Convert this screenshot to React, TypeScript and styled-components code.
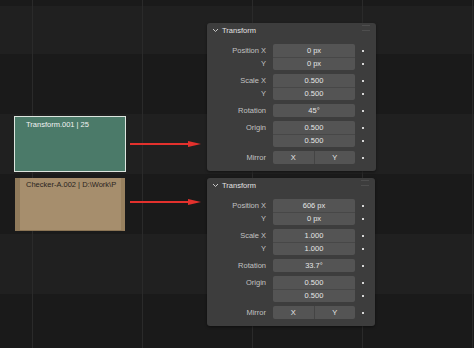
import React from "react";
import styled, { createGlobalStyle } from "styled-components";

const Global = createGlobalStyle`
  html, body { margin: 0; padding: 0; background: #1a1a1a; }
  body {
    font-family: "Liberation Sans", Arial, sans-serif;
    -webkit-font-smoothing: antialiased;
  }
`;

const Canvas = styled.div`
  position: relative;
  width: 474px;
  height: 348px;
  overflow: hidden;
  background-color: #1a1a1a;
  background-image:
    repeating-linear-gradient(to right, #2a2a2a 0 1px, transparent 1px 110px),
    repeating-linear-gradient(to bottom, #1a1a1a 0 60px, #202020 60px 120px);
  background-position: 32px 0, 0 54px;
`;

const Strip = styled.div<{ $kind: "green" | "tan" }>`
  position: absolute;
  box-sizing: border-box;
  font-size: 7.5px;
  white-space: nowrap;
  overflow: hidden;
  ${(p) =>
    p.$kind === "green"
      ? `left:14px; top:116px; width:112px; height:56px;
         background:#4b7a69; border:1px solid #dde5df; color:#f2f2f2;
         padding:3px 0 0 11px;`
      : `left:15px; top:178px; width:110px; height:53px;
         background:#a68e6d; color:#2a241e;
         padding:2px 0 0 6px;
         border-left:5px solid #8f7a5b; border-right:4px solid #98815f;
         border-bottom:1px solid #8a7455;`}
`;

const Arrows = styled.svg`
  position: absolute;
  left: 126px;
  top: 136px;
`;

const PanelStack = styled.div`
  position: relative;
  display: flex;
  flex-direction: column;
  gap: 7px;
  padding: 23px 0 0 207px;
`;

const Panel = styled.section<{ $w: number }>`
  width: ${(p) => p.$w}px;
  background: #3d3d3d;
  border-radius: 3px;
  padding-bottom: 7px;
  box-shadow: 0 1px 3px rgba(0, 0, 0, 0.45);
`;

const Header = styled.div`
  display: flex;
  align-items: center;
  height: 14px;
  margin-bottom: 7px;
  padding: 0 5px 0 5px;
  color: #e2e2e2;
  font-size: 7.5px;
  gap: 3px;
`;

const HeaderTitle = styled.span`
  flex: 1;
`;

const Grip = styled.div`
  width: 8px;
  height: 4px;
  border-top: 1px solid #4e4e4e;
  border-bottom: 1px solid #4e4e4e;
  margin-right: 1px;
  margin-top: -4px;
`;

const Body = styled.div`
  display: flex;
  flex-direction: column;
  gap: 4px;
`;

const Group = styled.div`
  display: flex;
  flex-direction: column;
`;

const Row = styled.div`
  display: grid;
  grid-template-columns: 66px 82px 1fr;
  height: 13px;
  align-items: stretch;
`;

const Label = styled.div`
  text-align: right;
  padding-right: 7px;
  color: #c2c2c2;
  font-size: 7.5px;
  line-height: 13px;
`;

const Field = styled.div<{ $first: boolean; $last: boolean }>`
  display: flex;
  background: #545454;
  color: #e6e6e6;
  font-size: 7.5px;
  line-height: 13px;
  border-radius: ${(p) => (p.$first ? "2px 2px" : "0 0")} ${(p) => (p.$last ? "2px 2px" : "0 0")};
  box-shadow: ${(p) => (p.$first ? "none" : "inset 0 1px 0 #474747")};
  overflow: hidden;
`;

const Cell = styled.div`
  flex: 1;
  text-align: center;
  & + & {
    border-left: 1px solid #444;
  }
`;

const DotCell = styled.div`
  display: flex;
  align-items: center;
  padding-left: 7px;
`;

const Dot = styled.div`
  width: 2px;
  height: 2px;
  background: #d6d6d6;
`;

type RowData = { label: string; values: string[] };
type GroupData = RowData[];

const Chevron = () => (
  <svg width="7" height="5" viewBox="0 0 7 5">
    <polyline points="1,1 3.5,3.5 6,1" fill="none" stroke="#c8c8c8" strokeWidth="1" />
  </svg>
);

const TransformPanel = ({ width, groups }: { width: number; groups: GroupData[] }) => (
  <Panel $w={width}>
    <Header>
      <Chevron />
      <HeaderTitle>Transform</HeaderTitle>
      <Grip />
    </Header>
    <Body>
      {groups.map((g, gi) => (
        <Group key={gi}>
          {g.map((r, ri) => (
            <Row key={ri}>
              <Label>{r.label}</Label>
              <Field $first={ri === 0} $last={ri === g.length - 1}>
                {r.values.map((v, vi) => (
                  <Cell key={vi}>{v}</Cell>
                ))}
              </Field>
              <DotCell>
                <Dot />
              </DotCell>
            </Row>
          ))}
        </Group>
      ))}
    </Body>
  </Panel>
);

const makeGroups = (px: string, scale: string, rot: string): GroupData[] => [
  [
    { label: "Position X", values: [px] },
    { label: "Y", values: ["0 px"] },
  ],
  [
    { label: "Scale X", values: [scale] },
    { label: "Y", values: [scale] },
  ],
  [{ label: "Rotation", values: [rot] }],
  [
    { label: "Origin", values: ["0.500"] },
    { label: "", values: ["0.500"] },
  ],
  [{ label: "Mirror", values: ["X", "Y"] }],
];

export default function App() {
  return (
    <>
      <Global />
      <Canvas>
        <Strip $kind="green">Transform.001 | 25</Strip>
        <Strip $kind="tan">Checker-A.002 | D:\Work\P</Strip>
        <Arrows width="80" height="72" viewBox="0 0 80 72">
          <g fill="#e3312d">
            <rect x="4" y="7" width="62" height="2" />
            <polygon points="62,5 75,8 62,11" />
            <rect x="4" y="65" width="62" height="2" />
            <polygon points="62,63 75,66 62,69" />
          </g>
        </Arrows>
        <PanelStack>
          <TransformPanel width={169} groups={makeGroups("0 px", "0.500", "45°")} />
          <TransformPanel width={168} groups={makeGroups("606 px", "1.000", "33.7°")} />
        </PanelStack>
      </Canvas>
    </>
  );
}
